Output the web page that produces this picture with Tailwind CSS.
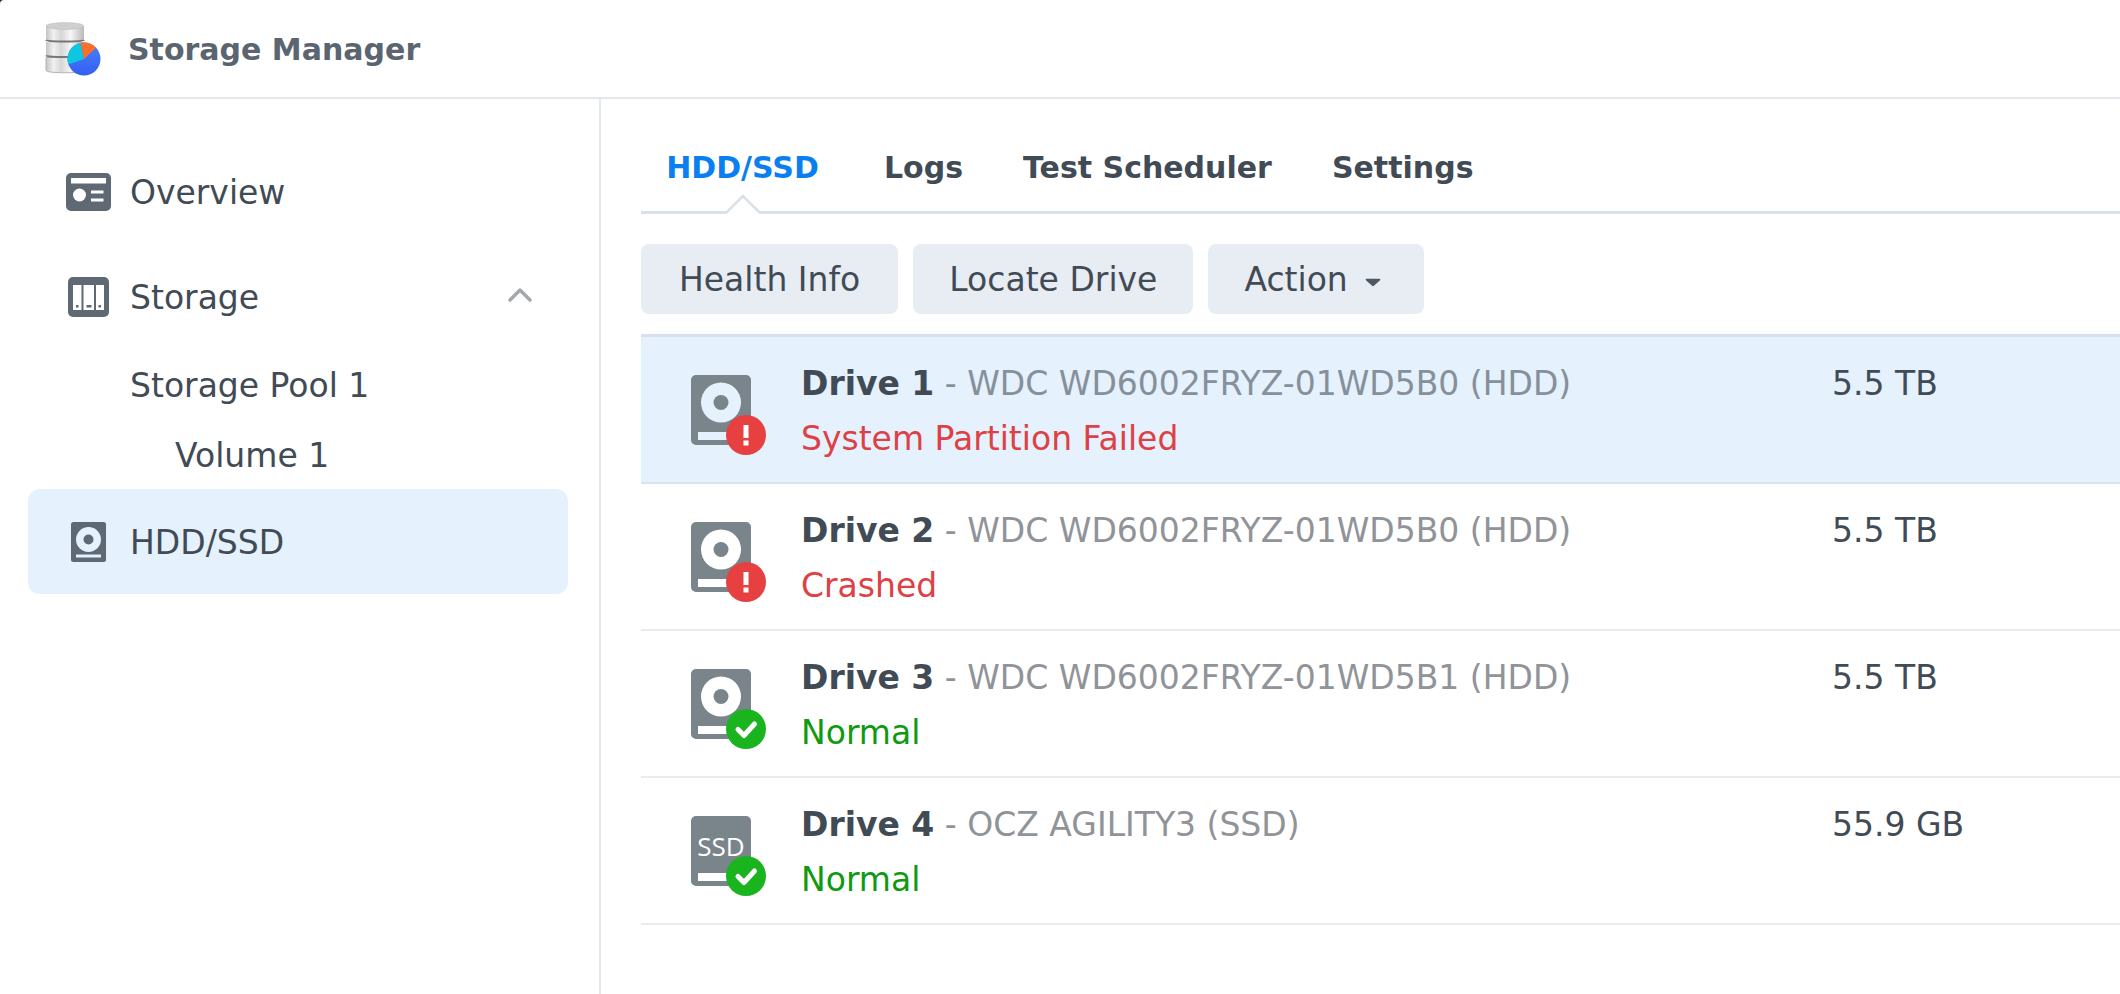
<!DOCTYPE html>
<html lang="en">
<head>
<meta charset="utf-8">
<title>Storage Manager</title>
<script src="https://cdn.jsdelivr.net/npm/@tailwindcss/browser@4"></script>
</head>
<body class="bg-[#222]">
<svg class="hidden" aria-hidden="true">
  <symbol id="hdd" viewBox="0 0 76 80">
    <path fill="#7a848b" fill-rule="evenodd" d="M5 0H55a5 5 0 0 1 5 5V65a5 5 0 0 1-5 5H5a5 5 0 0 1-5-5V5a5 5 0 0 1 5-5ZM30 7.500a20 20 0 1 0 0 40a20 20 0 1 0 0-40ZM7 57V65H40V57Z"/>
    <circle cx="30" cy="27.500" r="7.500" fill="#7a848b"/>
  </symbol>
  <symbol id="ssd" viewBox="0 0 76 80">
    <path fill="#7a848b" fill-rule="evenodd" d="M5 0H55a5 5 0 0 1 5 5V65a5 5 0 0 1-5 5H5a5 5 0 0 1-5-5V5a5 5 0 0 1 5-5ZM7 57V65H40V57Z"/>
    <text x="30" y="40" text-anchor="middle" font-family="Open Sans, sans-serif" font-size="26" font-weight="500" fill="#fff">SSD</text>
  </symbol>
  <symbol id="bad" viewBox="0 0 76 80">
    <circle cx="55" cy="60" r="20" fill="#e64040"/>
    <path fill="#fff" d="M52.500 50h5v13h-5zM52.500 65.500h5v5h-5z"/>
  </symbol>
  <symbol id="good" viewBox="0 0 76 80">
    <circle cx="55" cy="60" r="20" fill="#1ab41f"/>
    <path d="M47 60.500l6 6L63.500 55" fill="none" stroke="#fff" stroke-width="5" stroke-linecap="round" stroke-linejoin="round"/>
  </symbol>
</svg>
<div class="flex min-h-screen flex-col overflow-hidden rounded-tl-[4px] bg-white text-[33px] text-[#414b55] font-['Verdana','DejaVu_Sans',sans-serif]">
  <header class="flex h-[99px] items-center gap-6 border-b-2 border-[#e3e8ed] pl-11 pt-0.5">
    <svg class="h-[56px] w-[60px]" viewBox="0 0 60 56" aria-hidden="true">
      <defs>
        <linearGradient id="metal" x1="0" x2="1">
          <stop offset="0" stop-color="#c4c4c4"/><stop offset=".2" stop-color="#f1f1f1"/><stop offset=".4" stop-color="#d6d6d6"/><stop offset=".65" stop-color="#f7f7f7"/><stop offset="1" stop-color="#b9b9b9"/>
        </linearGradient>
        <linearGradient id="blue" x1="0" y1="0" x2="0" y2="1"><stop offset="0" stop-color="#4a80f8"/><stop offset="1" stop-color="#345ff3"/></linearGradient>
      </defs>
      <path d="M2 35.500V48.500c0 3 38 3 38 0V35.500Z" fill="url(#metal)" stroke="#b5b5b5"/>
      <path d="M2 20V33.500c0 2 38 2 38 0V20Z" fill="url(#metal)"/>
      <path d="M2 33.500c0 2 38 2 38 0" fill="none" stroke="#777" stroke-width="2"/>
      <path d="M2 4V18c0 2 38 2 38 0V4Z" fill="url(#metal)"/>
      <path d="M2 18c0 2 38 2 38 0" fill="none" stroke="#777" stroke-width="2"/>
      <ellipse cx="21" cy="4" rx="19" ry="3.500" fill="#cfcfcf" stroke="#bdbdbd" stroke-width=".5"/>
      <circle cx="40" cy="37" r="16.500" fill="url(#blue)"/>
      <path d="M40 37L36.500 20.900A16.500 16.500 0 0 0 24.400 42.500Z" fill="#0dc6e0"/>
      <path d="M40 37L36.500 20.900A16.500 16.500 0 0 1 52 25.700Z" fill="#fb6f2a"/>
    </svg>
    <h1 class="text-[30px] font-bold leading-[40px] text-[#5b6570]">Storage Manager</h1>
  </header>

  <div class="flex flex-1">
    <aside class="w-[601px] shrink-0 border-r-2 border-[#e3e8ed] px-7 pt-10">
      <nav aria-label="Storage" class="mr-[3px] flex flex-col">
        <a href="#overview" class="flex h-[105px] items-center gap-[18px] rounded-xl px-9">
          <svg class="size-12" viewBox="0 0 48 48" aria-hidden="true">
            <rect x="2" y="5" width="45" height="38" rx="5" fill="#5f6973"/>
            <path fill="#fff" d="M7 10h35v5.500H7zM27 22.500h12.500v3H27zM27 30.500h12.500v3H27z"/>
            <circle cx="15.500" cy="27" r="6.500" fill="#fff"/>
          </svg>
          <span class="pt-0.5">Overview</span>
        </a>
        <button type="button" aria-expanded="true" class="flex h-[105px] items-center gap-[18px] rounded-xl px-9 text-left">
          <svg class="size-12" viewBox="0 0 48 48" aria-hidden="true">
            <rect x="4" y="4" width="41" height="40" rx="5" fill="#5f6973"/>
            <path fill="#fff" d="M9 12h8.500v25H9zM19.500 12h10.500v25H19.500zM32 12h8v25H32z"/>
            <path fill="#5f6973" d="M12 32h2.500v2.500H12zM22.500 32h5v2.500h-5zM34.500 32h2.500v2.500h-2.500z"/>
          </svg>
          <span class="flex-1 pt-0.5">Storage</span>
          <svg class="mb-1 h-4 w-[24px]" viewBox="0 0 24 16" aria-hidden="true"><path d="M2 13L12 3L22 13" fill="none" stroke="#a3a8ad" stroke-width="3.500" stroke-linecap="round" stroke-linejoin="round"/></svg>
        </button>
        <a href="#pool-1" class="flex h-[70px] items-center pl-[102px] pt-1">Storage Pool 1</a>
        <a href="#volume-1" class="flex h-[70px] items-center pl-[147px] pt-1">Volume 1</a>
        <a href="#drives" aria-current="page" class="flex h-[105px] items-center gap-[18px] rounded-xl bg-[#e5f1fd] px-9">
          <svg class="size-12" viewBox="0 0 48 48" aria-hidden="true">
            <rect x="7" y="4" width="35" height="40" rx="2.500" fill="#5f6973"/>
            <circle cx="24.500" cy="21.500" r="12.500" fill="#e5f1fd"/>
            <circle cx="24.500" cy="21.500" r="5" fill="#5f6973"/>
            <path fill="#e5f1fd" d="M12 36.500h25v3H12z"/>
          </svg>
          <span class="pt-0.5">HDD/SSD</span>
        </a>
      </nav>
    </aside>

    <main class="min-w-0 flex-1 pl-10">
      <nav aria-label="Drive views" class="flex h-[115px] gap-[60px] border-b-[3px] border-[#d9e0e8] pl-5 pt-[47px] text-[30px] font-bold leading-[44px]">
        <a href="#hdd" aria-current="page" class="relative w-[163px] text-center text-[#0a80f0]">HDD/SSD
          <svg class="absolute -bottom-[3px] left-1/2 h-5 w-[36px] -translate-x-1/2" viewBox="0 0 36 20" aria-hidden="true"><path d="M1 17L18 1L35 17V20H1Z" fill="#fff"/><path d="M0 18.500H1.500L18 2L34.500 18.500H36" fill="none" stroke="#d9e0e8" stroke-width="2.500"/></svg>
        </a>
        <a href="#logs">Logs</a>
        <a href="#scheduler">Test Scheduler</a>
        <a href="#settings">Settings</a>
      </nav>
      <div class="flex gap-[15px] pb-5 pt-[30px]">
        <button type="button" class="h-[70px] rounded-lg bg-[#e8edf4] px-[38px] pt-0.5">Health Info</button>
        <button type="button" class="h-[70px] rounded-lg bg-[#e8edf4] px-[36px] pt-0.5">Locate Drive</button>
        <button type="button" aria-haspopup="menu" class="flex h-[70px] items-center gap-[17px] rounded-lg bg-[#e8edf4] pl-[36px] pr-[43px] pt-0.5">Action
          <svg class="mt-1 h-[9px] w-4" viewBox="0 0 17 9" aria-hidden="true"><path d="M1.500 .5H15.500Q17 1 16 2L9.500 8Q8.500 9 7.500 8L1 2Q0 1 1.500 .5Z" fill="#4f5963"/></svg>
        </button>
      </div>
      <table class="w-full table-fixed border-t-[3px] border-[#d9e0e8] text-left leading-[55px]">
        <colgroup><col class="w-[160px]"><col><col class="w-[288px]"></colgroup>
        <tbody>
          <tr class="h-[147px] border-b-2 border-[#d9e3ec] bg-[#e5f1fd] align-top" aria-selected="true">
            <td class="pl-[50px] pt-[38px]"><svg class="h-20 w-[76px]" role="img" aria-label="HDD, failed"><use href="#hdd"/><use href="#bad"/></svg></td>
            <td class="pt-[19px]"><p class="text-[#85909b]"><b class="text-[#414b55]">Drive 1</b> - WDC WD6002FRYZ-01WD5B0 (HDD)</p><p class="text-[#de4145]">System Partition Failed</p></td>
            <td class="pt-[19px]">5.5 TB</td>
          </tr>
          <tr class="h-[147px] border-b-2 border-[#e8ecf0] align-top">
            <td class="pl-[50px] pt-[38px]"><svg class="h-20 w-[76px]" role="img" aria-label="HDD, crashed"><use href="#hdd"/><use href="#bad"/></svg></td>
            <td class="pt-[19px]"><p class="text-[#909499]"><b class="text-[#414b55]">Drive 2</b> - WDC WD6002FRYZ-01WD5B0 (HDD)</p><p class="text-[#de4145]">Crashed</p></td>
            <td class="pt-[19px]">5.5 TB</td>
          </tr>
          <tr class="h-[147px] border-b-2 border-[#e8ecf0] align-top">
            <td class="pl-[50px] pt-[38px]"><svg class="h-20 w-[76px]" role="img" aria-label="HDD, normal"><use href="#hdd"/><use href="#good"/></svg></td>
            <td class="pt-[19px]"><p class="text-[#909499]"><b class="text-[#414b55]">Drive 3</b> - WDC WD6002FRYZ-01WD5B1 (HDD)</p><p class="text-[#0f9a12]">Normal</p></td>
            <td class="pt-[19px]">5.5 TB</td>
          </tr>
          <tr class="h-[147px] border-b-2 border-[#e8ecf0] align-top">
            <td class="pl-[50px] pt-[38px]"><svg class="h-20 w-[76px]" role="img" aria-label="SSD, normal"><use href="#ssd"/><use href="#good"/></svg></td>
            <td class="pt-[19px]"><p class="text-[#909499]"><b class="text-[#414b55]">Drive 4</b> - OCZ AGILITY3 (SSD)</p><p class="text-[#0f9a12]">Normal</p></td>
            <td class="pt-[19px]">55.9 GB</td>
          </tr>
        </tbody>
      </table>
    </main>
  </div>
</div>
</body>
</html>
